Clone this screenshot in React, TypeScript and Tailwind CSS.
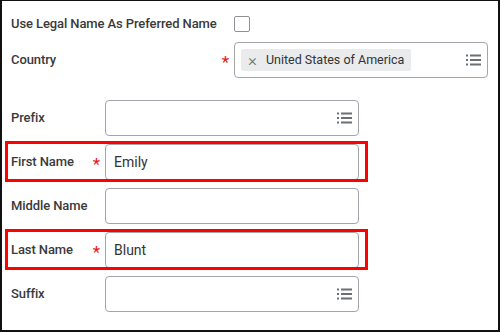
import type { ReactNode } from 'react'

function ListIcon() {
  return (
    <svg width="15" height="12" viewBox="0 0 15 12" className="text-[#6b7075]">
      <rect x="0" y="0.5" width="2" height="2" fill="currentColor" />
      <rect x="0" y="5" width="2" height="2" fill="currentColor" />
      <rect x="0" y="9.5" width="2" height="2" fill="currentColor" />
      <rect x="4" y="0.5" width="11" height="2" fill="currentColor" />
      <rect x="4" y="5" width="11" height="2" fill="currentColor" />
      <rect x="4" y="9.5" width="11" height="2" fill="currentColor" />
    </svg>
  )
}

const Star = () => <span className="text-[#e8141a] text-[17px] leading-none mr-[5px] mt-[4px]">*</span>

type Field = {
  label: string
  required?: boolean
  value?: string
  list?: boolean
  flagged?: boolean
}

const fields: Field[] = [
  { label: 'Prefix', list: true },
  { label: 'First Name', required: true, value: 'Emily', flagged: true },
  { label: 'Middle Name' },
  { label: 'Last Name', required: true, value: 'Blunt', flagged: true },
  { label: 'Suffix', list: true },
]

function Label({ children }: { children: ReactNode }) {
  return (
    <span className="flex-1 whitespace-nowrap text-[13px] tracking-[-0.1px] font-medium text-[#3a3a3a]">
      {children}
    </span>
  )
}

function Row({ f }: { f: Field }) {
  return (
    <div className="relative flex items-center h-[36px]">
      {f.flagged && (
        <div className="absolute -left-[6px] -top-[3px] w-[363px] h-[41px] border-[3px] border-[#ff0000] pointer-events-none" />
      )}
      <div className="w-[94px] flex items-center">
        <Label>{f.label}</Label>
        {f.required && <Star />}
      </div>
      <div className="w-[254px] h-[36px] rounded-[4px] border border-[#a2a6ab] flex items-center justify-between pl-[8px] pr-[6px]">
        <span className="text-[14px] text-[#333]">{f.value}</span>
        {f.list && <ListIcon />}
      </div>
    </div>
  )
}

export default function App() {
  return (
    <div
      className="w-[500px] h-[332px] bg-white border-[#111] border-t border-l-2 border-r-2 border-b-2 pt-[15px] pl-[9px]"
      style={{ fontFamily: 'Roboto, "Liberation Sans", sans-serif' }}
    >
      <div className="flex items-center h-[16px]">
        <div className="w-[223px] flex items-center">
          <Label>Use Legal Name As Preferred Name</Label>
        </div>
        <div className="w-[16px] h-[16px] rounded-[2px] border border-[#8e9297]" />
      </div>
      <div className="flex items-center h-[36px] mt-[10px]">
        <div className="w-[223px] flex items-center">
          <Label>Country</Label>
          <Star />
        </div>
        <div className="w-[254px] h-[36px] rounded-[4px] border border-[#a2a6ab] flex items-center justify-between pl-[6px] pr-[6px]">
          <div className="h-[22px] w-[170px] rounded-[2px] bg-[#e9ebed] flex items-center pl-[7px] gap-[9px] text-[12.5px] text-[#333] whitespace-nowrap">
            <span className="text-[#6b7075] text-[17px] font-light leading-none">×</span>
            <span>United States of America</span>
          </div>
          <ListIcon />
        </div>
      </div>
      <div className="mt-[22px] flex flex-col gap-[8px]">
        {fields.map((f) => (
          <Row key={f.label} f={f} />
        ))}
      </div>
    </div>
  )
}
